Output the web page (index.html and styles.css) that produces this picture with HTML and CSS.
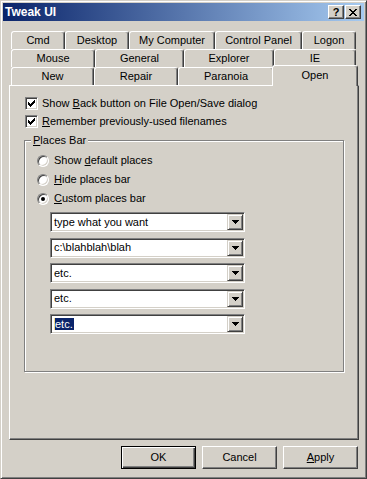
FILE: index.html
```html
<!DOCTYPE html>
<html lang="en">
<head>
<meta charset="utf-8">
<title>Tweak UI</title>
<link rel="stylesheet" href="styles.css">
</head>
<body>
<div class="window">
  <div class="titlebar">
    <span class="title">Tweak UI</span>
    <div class="cbtns">
      <span class="cbtn help">?</span>
      <span class="cbtn close">
        <svg width="8" height="7" viewBox="0 0 8 7" shape-rendering="crispEdges"><path d="M0 0h2v1h-2z M6 0h2v1h-2z M1 1h2v1h-2z M5 1h2v1h-2z M2 2h4v1h-4z M3 3h2v1h-2z M2 4h4v1h-4z M1 5h2v1h-2z M5 5h2v1h-2z M0 6h2v1h-2z M6 6h2v1h-2z" fill="#000"/></svg>
      </span>
    </div>
  </div>
  <div class="client">
    <div class="tabs">
      <div class="tabrow">
        <div class="tab w54">Cmd</div>
        <div class="tab w64">Desktop</div>
        <div class="tab w86">My Computer</div>
        <div class="tab w87">Control Panel</div>
        <div class="tab w54">Logon</div>
      </div>
      <div class="tabrow">
        <div class="tab w84">Mouse</div>
        <div class="tab w89">General</div>
        <div class="tab w90">Explorer</div>
        <div class="tab w82">IE</div>
      </div>
      <div class="tabrow">
        <div class="tab w83">New</div>
        <div class="tab w84">Repair</div>
        <div class="tab w96">Paranoia</div>
        <div class="tab sel">Open</div>
      </div>
    </div>
    <div class="panel">
      <div class="check">
        <span class="cbox"><svg width="7" height="7" viewBox="0 0 7 7" shape-rendering="crispEdges"><path d="M0 2h1v3h-1z M1 3h1v3h-1z M2 4h1v3h-1z M3 3h1v3h-1z M4 2h1v3h-1z M5 1h1v3h-1z M6 0h1v3h-1z" fill="#000"/></svg></span>
        <span>Show <u>B</u>ack button on File Open/Save dialog</span>
      </div>
      <div class="check">
        <span class="cbox"><svg width="7" height="7" viewBox="0 0 7 7" shape-rendering="crispEdges"><path d="M0 2h1v3h-1z M1 3h1v3h-1z M2 4h1v3h-1z M3 3h1v3h-1z M4 2h1v3h-1z M5 1h1v3h-1z M6 0h1v3h-1z" fill="#000"/></svg></span>
        <span><u>R</u>emember previously-used filenames</span>
      </div>
      <div class="group">
        <div class="group-label"><u>P</u>laces Bar</div>
        <div class="radios">
          <div class="radio-row"><span class="radio"></span><span>Show <u>d</u>efault places</span></div>
          <div class="radio-row"><span class="radio"></span><span><u>H</u>ide places bar</span></div>
          <div class="radio-row"><span class="radio on"></span><span><u>C</u>ustom places bar</span></div>
        </div>
        <div class="combos">
          <div class="combo"><span class="ctext">type what you want</span><span class="dbtn"><svg width="7" height="4" viewBox="0 0 7 4" shape-rendering="crispEdges"><path d="M0 0h7v1h-1v1h-1v1h-1v1h-1v-1h-1v-1h-1v-1h-1z" fill="#000"/></svg></span></div>
          <div class="combo"><span class="ctext">c:\blahblah\blah</span><span class="dbtn"><svg width="7" height="4" viewBox="0 0 7 4" shape-rendering="crispEdges"><path d="M0 0h7v1h-1v1h-1v1h-1v1h-1v-1h-1v-1h-1v-1h-1z" fill="#000"/></svg></span></div>
          <div class="combo"><span class="ctext">etc.</span><span class="dbtn"><svg width="7" height="4" viewBox="0 0 7 4" shape-rendering="crispEdges"><path d="M0 0h7v1h-1v1h-1v1h-1v1h-1v-1h-1v-1h-1v-1h-1z" fill="#000"/></svg></span></div>
          <div class="combo"><span class="ctext">etc.</span><span class="dbtn"><svg width="7" height="4" viewBox="0 0 7 4" shape-rendering="crispEdges"><path d="M0 0h7v1h-1v1h-1v1h-1v1h-1v-1h-1v-1h-1v-1h-1z" fill="#000"/></svg></span></div>
          <div class="combo"><span class="ctext"><span class="hl">etc.</span></span><span class="dbtn"><svg width="7" height="4" viewBox="0 0 7 4" shape-rendering="crispEdges"><path d="M0 0h7v1h-1v1h-1v1h-1v1h-1v-1h-1v-1h-1v-1h-1z" fill="#000"/></svg></span></div>
        </div>
      </div>
    </div>
    <div class="buttons">
      <div class="btn default">OK</div>
      <div class="btn">Cancel</div>
      <div class="btn"><span><u>A</u>pply</span></div>
    </div>
  </div>
</div>
</body>
</html>
```

FILE: styles.css
```css
* { box-sizing: border-box; }

body {
  margin: 0;
  background: #D4D0C8;
  font-family: "Liberation Sans", Arial, sans-serif;
  font-size: 11px;
  line-height: 13px;
  color: #000;
}

.window {
  width: 367px;
  height: 479px;
  background: #D4D0C8;
  border: 1px solid;
  border-color: #D4D0C8 #404040 #404040 #D4D0C8;
  box-shadow: inset 1px 1px 0 #fff, inset -1px -1px 0 #808080;
  padding: 2px;
  display: flex;
  flex-direction: column;
}

.titlebar {
  height: 18px;
  flex-shrink: 0;
  background: linear-gradient(to right, #0A246A, #A6CAF0);
  display: flex;
  align-items: center;
  padding: 0 3px 0 2px;
}

.title {
  flex: 1;
  color: #fff;
  font-weight: bold;
  font-size: 12px;
}

.cbtns {
  display: flex;
  gap: 1px;
}

.cbtn {
  width: 16px;
  height: 14px;
  background: #D4D0C8;
  border: 1px solid;
  border-color: #fff #404040 #404040 #fff;
  box-shadow: inset -1px -1px 0 #808080;
  display: flex;
  align-items: center;
  justify-content: center;
}

.cbtn.help {
  font-weight: bold;
  font-size: 11px;
  line-height: 12px;
}

.client {
  flex: 1;
  padding: 10px 5px 0 6px;
  display: flex;
  flex-direction: column;
}

.tabs {
  padding-left: 2px;
}

.tabrow {
  display: flex;
  height: 18px;
}

.tab {
  flex-shrink: 0;
  height: 18px;
  border: 1px solid;
  border-bottom: 0;
  border-color: #fff #404040 transparent #fff;
  border-radius: 3px 3px 0 0;
  box-shadow: inset -1px 0 0 #808080;
  background: #D4D0C8;
  text-align: center;
  line-height: 17px;
  white-space: nowrap;
}

.w54 { width: 54px; }
.w64 { width: 64px; }
.w82 { width: 82px; }
.w83 { width: 83px; }
.w84 { width: 84px; }
.w86 { width: 86px; }
.w87 { width: 87px; }
.w89 { width: 89px; }
.w90 { width: 90px; }
.w96 { width: 96px; }

.tab.sel {
  width: 86px;
  height: 21px;
  margin: -2px -2px 0;
  position: relative;
  z-index: 1;
  line-height: 18px;
}

.panel {
  height: 355px;
  flex-shrink: 0;
  border: 1px solid;
  border-color: #fff #404040 #404040 #fff;
  box-shadow: inset -1px -1px 0 #808080;
  padding: 11px 14px 0 14px;
}

.check {
  display: flex;
  align-items: center;
  gap: 4px;
  height: 13px;
  margin-bottom: 5px;
  padding-left: 1px;
  white-space: nowrap;
}

.cbox {
  width: 13px;
  height: 13px;
  flex-shrink: 0;
  background: #fff;
  border: 1px solid;
  border-color: #808080 #fff #fff #808080;
  box-shadow: inset 1px 1px 0 #404040, inset -1px -1px 0 #D4D0C8;
  display: flex;
  align-items: center;
  justify-content: center;
}

.group {
  width: 320px;
  height: 232px;
  margin-top: 12px;
  border: 1px solid #808080;
  box-shadow: inset 1px 1px 0 #fff, 1px 1px 0 #fff;
}

.group-label {
  width: max-content;
  margin: -7px 0 0 6px;
  padding: 0 2px;
  background: #D4D0C8;
  line-height: 13px;
}

.radios {
  margin-top: 4px;
}

.radio-row {
  display: flex;
  align-items: center;
  gap: 5px;
  height: 19px;
  padding-left: 12px;
  white-space: nowrap;
}

.radio {
  width: 12px;
  height: 12px;
  flex-shrink: 0;
  border-radius: 50%;
  background: #fff;
  border: 1px solid;
  border-color: #808080 #fff #fff #808080;
  box-shadow: inset 1px 1px 0 #404040, inset -1px -1px 0 #D4D0C8;
  display: flex;
  align-items: center;
  justify-content: center;
}

.radio.on::after {
  content: "";
  width: 4px;
  height: 4px;
  border-radius: 50%;
  background: #000;
}

.combos {
  margin: 4px 0 0 25px;
  display: flex;
  flex-direction: column;
  gap: 5.5px;
}

.combo {
  width: 195px;
  height: 20px;
  background: #fff;
  border: 1px solid;
  border-color: #808080 #fff #fff #808080;
  box-shadow: inset 1px 1px 0 #404040, inset -1px -1px 0 #D4D0C8;
  padding: 1px;
  display: flex;
  align-items: center;
}

.ctext {
  flex: 1;
  padding-left: 2px;
  white-space: nowrap;
}

.hl {
  background: #0A246A;
  color: #fff;
  border-left: 1px solid #F2D98C;
  padding: 0 1px 0 0;
}

.dbtn {
  width: 16px;
  height: 16px;
  flex-shrink: 0;
  background: #D4D0C8;
  border: 1px solid;
  border-color: #D4D0C8 #404040 #404040 #D4D0C8;
  box-shadow: inset 1px 1px 0 #fff, inset -1px -1px 0 #808080;
  display: flex;
  align-items: center;
  justify-content: center;
}

.buttons {
  display: flex;
  justify-content: flex-end;
  gap: 6px;
  margin-top: 6px;
  padding-right: 1px;
}

.btn {
  width: 75px;
  height: 23px;
  border: 1px solid;
  border-color: #fff #404040 #404040 #fff;
  box-shadow: inset -1px -1px 0 #808080;
  display: flex;
  align-items: center;
  justify-content: center;
}

.btn.default {
  border-color: #000;
  box-shadow: inset 1px 1px 0 #fff, inset -1px -1px 0 #404040, inset -2px -2px 0 #808080;
}
```
